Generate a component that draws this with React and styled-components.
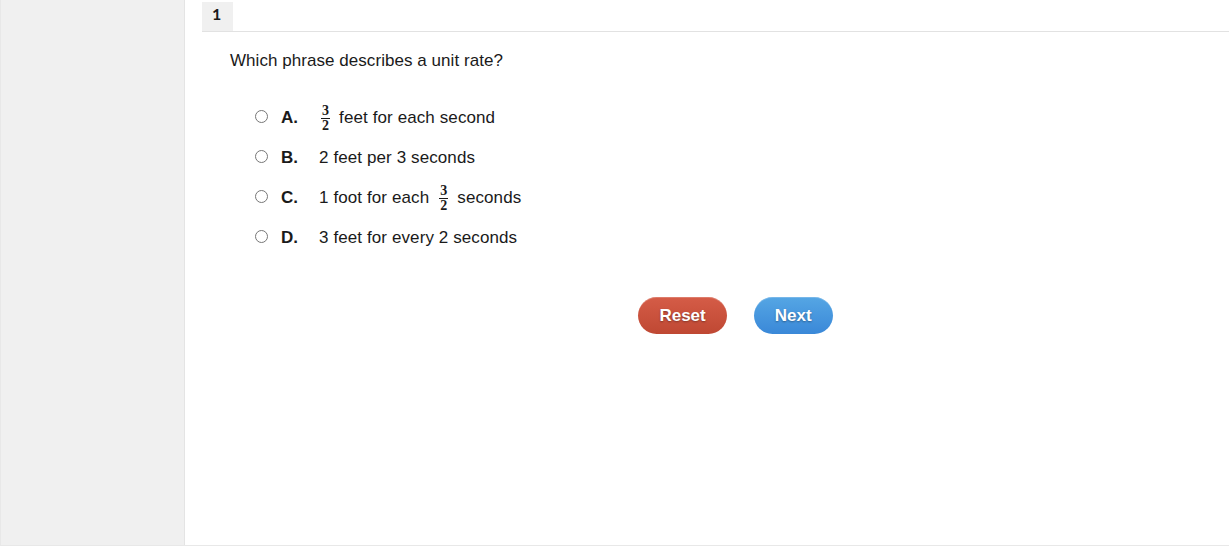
import React from "react";
import styled, { createGlobalStyle } from "styled-components";

const GlobalStyle = createGlobalStyle`
  html, body { margin: 0; padding: 0; background: #fff; }
  body { font-family: "Liberation Sans", Arial, sans-serif; color: #1a1a1a; }
`;

const options = [
  { key: "A", parts: [{ frac: ["3", "2"] }, " feet for each second"] },
  { key: "B", parts: ["2 feet per 3 seconds"] },
  { key: "C", parts: ["1 foot for each ", { frac: ["3", "2"] }, " seconds"] },
  { key: "D", parts: ["3 feet for every 2 seconds"] },
];

export default function App() {
  return (
    <>
      <GlobalStyle />
      <Page>
        <Sidebar />
        <Main>
          <TabBar>
            <Tab>1</Tab>
          </TabBar>
          <Question>Which phrase describes a unit rate?</Question>
          <OptionList>
            {options.map((o) => (
              <Option key={o.key}>
                <Radio type="radio" name="q1" />
                <Letter>{o.key}.</Letter>
                <OptionText>
                  {o.parts.map((p, i) =>
                    typeof p === "string" ? (
                      <span key={i}>{p}</span>
                    ) : (
                      <Frac key={i}>
                        <Num>{p.frac[0]}</Num>
                        <Den>{p.frac[1]}</Den>
                      </Frac>
                    )
                  )}
                </OptionText>
              </Option>
            ))}
          </OptionList>
          <Buttons>
            <Button $color="red">Reset</Button>
            <Button $color="blue">Next</Button>
          </Buttons>
        </Main>
      </Page>
    </>
  );
}

const Page = styled.div`
  display: flex;
  height: 546px;
  box-sizing: border-box;
  border-bottom: 1px solid #e8e8e8;
`;

const Sidebar = styled.div`
  width: 185px;
  flex-shrink: 0;
  background: #f0f0f0;
  border-right: 1px solid #e4e4e4;
  border-left: 1px solid #e8e8e8;
  box-sizing: border-box;
`;

const Main = styled.div`
  flex: 1;
  padding: 2px 0 0 17px;
`;

const TabBar = styled.div`
  display: flex;
  border-bottom: 1px solid #e2e2e2;
`;

const Tab = styled.div`
  width: 31px;
  height: 29px;
  background: #f0f0f0;
  font-family: Lato, "Liberation Sans", sans-serif;
  font-weight: 700;
  font-size: 16px;
  line-height: 24px;
  padding-left: 10px;
  box-sizing: border-box;
`;

const Question = styled.p`
  margin: 18px 0 0 28px;
  font-size: 17px;
  line-height: 22px;
  letter-spacing: 0.05px;
`;

const OptionList = styled.div`
  display: flex;
  flex-direction: column;
  margin: 26px 0 0 52px;
`;

const Option = styled.label`
  display: flex;
  align-items: center;
  height: 40px;
  font-size: 17px;
`;

const Radio = styled.input`
  width: 13px;
  height: 13px;
  margin: 0 13px 0 1px;
  position: relative;
  top: -2px;
  accent-color: #777;
`;

const Letter = styled.span`
  font-weight: 700;
  width: 38px;
`;

const OptionText = styled.span`
  display: inline-flex;
  align-items: center;
  gap: 8px;
  letter-spacing: 0.1px;
`;

const Frac = styled.span`
  display: inline-flex;
  flex-direction: column;
  align-items: center;
  font-family: "Liberation Serif", serif;
  font-weight: 700;
  font-size: 14px;
  line-height: 12px;
  margin: 0 1px 0 2px;
`;

const Num = styled.span`
  border-bottom: 1px solid #1a1a1a;
  padding: 0 1px 1px;
`;

const Den = styled.span`
  padding-top: 1px;
`;

const Buttons = styled.div`
  display: flex;
  justify-content: center;
  gap: 27px;
  margin: 39px 0 0 0;
  padding-left: 40px;
`;

const Button = styled.button`
  height: 37px;
  padding: 0 21px;
  border: none;
  border-radius: 19px;
  font-family: "Liberation Sans", Arial, sans-serif;
  font-weight: 700;
  font-size: 17px;
  color: #fff;
  text-shadow: 0 1px 2px rgba(0, 0, 0, 0.35);
  background: ${(p) =>
    p.$color === "red"
      ? "linear-gradient(#d55c47, #bf4833)"
      : "linear-gradient(#55a6e4, #3a88d8)"};
  box-shadow: inset 0 1px 0 rgba(255, 255, 255, 0.2);
`;
